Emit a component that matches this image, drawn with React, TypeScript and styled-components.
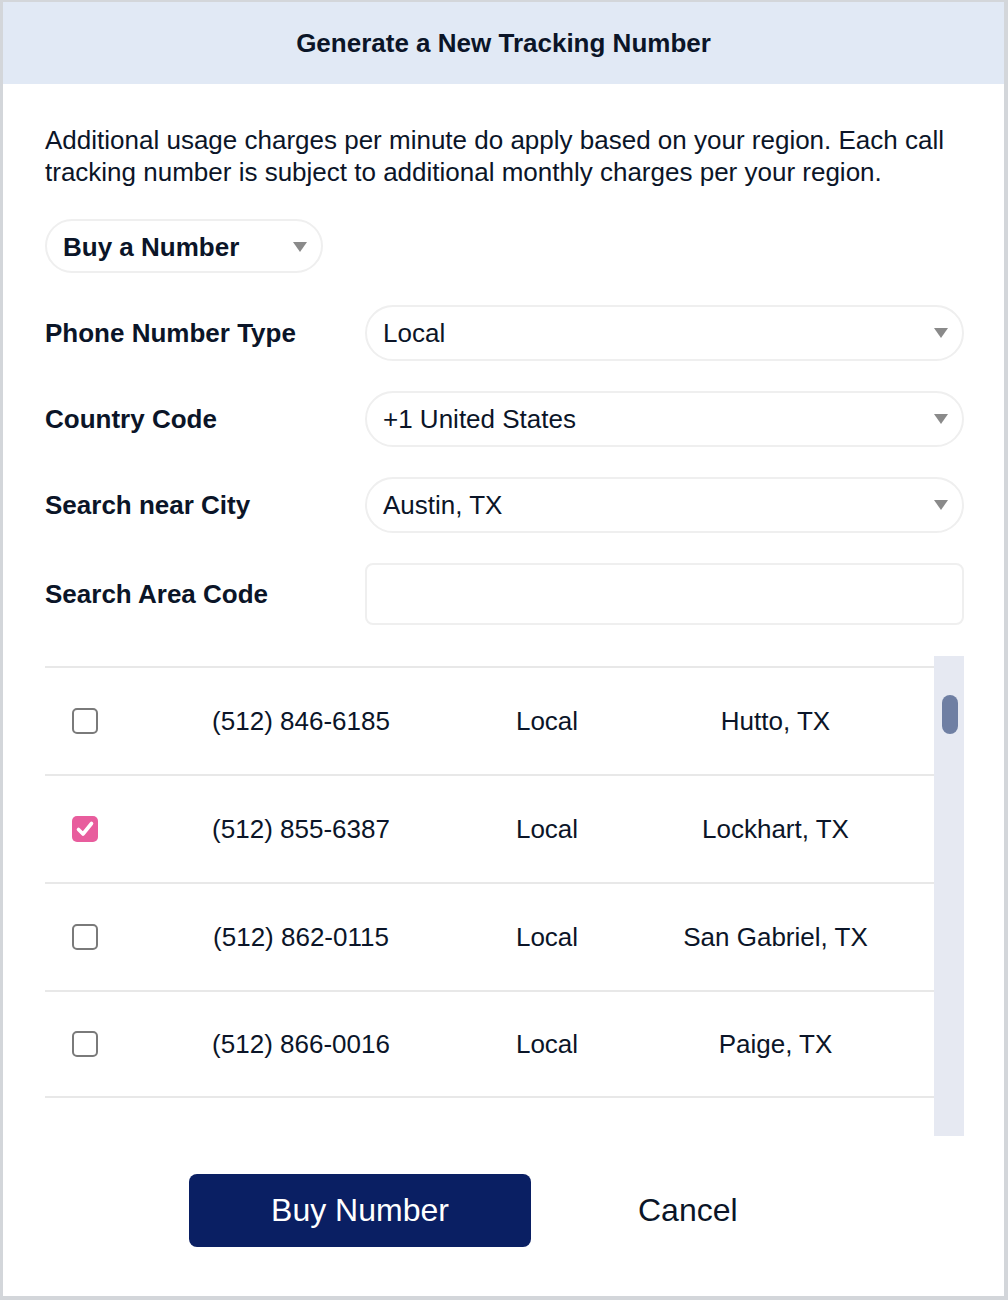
import React from 'react';
import styled, { createGlobalStyle } from 'styled-components';

const ink = '#0b1528';

type NumberRow = {
  phone: string;
  kind: string;
  city: string;
  checked: boolean;
};

const rows: NumberRow[] = [
  { phone: '(512) 846-6185', kind: 'Local', city: 'Hutto, TX', checked: false },
  { phone: '(512) 855-6387', kind: 'Local', city: 'Lockhart, TX', checked: true },
  { phone: '(512) 862-0115', kind: 'Local', city: 'San Gabriel, TX', checked: false },
  { phone: '(512) 866-0016', kind: 'Local', city: 'Paige, TX', checked: false },
];

const fields = [
  { label: 'Phone Number Type', value: 'Local' },
  { label: 'Country Code', value: '+1 United States' },
  { label: 'Search near City', value: 'Austin, TX' },
];

const Caret = () => (
  <CaretSvg viewBox="0 0 14 10" aria-hidden>
    <path d="M0 0 H14 L7 10 Z" fill="#8a8a8a" />
  </CaretSvg>
);

const Check = () => (
  <svg width="26" height="26" viewBox="0 0 26 26" aria-hidden>
    <path
      d="M6.5 13.5 L11 18 L19.5 7.5"
      fill="none"
      stroke="#fff"
      strokeWidth="3.6"
      strokeLinecap="round"
      strokeLinejoin="round"
    />
  </svg>
);

const App = () => {
  return (
    <>
      <GlobalStyle />
      <Modal>
        <Header>
          <Title>Generate a New Tracking Number</Title>
        </Header>
        <Body>
          <Description>
            Additional usage charges per minute do apply based on your region. Each call
            tracking number is subject to additional monthly charges per your region.
          </Description>

          <ModeSelect>
            <span>Buy a Number</span>
            <Caret />
          </ModeSelect>

          <FormGrid>
            {fields.map((f) => (
              <React.Fragment key={f.label}>
                <Label>{f.label}</Label>
                <PillSelect>
                  <span>{f.value}</span>
                  <Caret />
                </PillSelect>
              </React.Fragment>
            ))}
            <Label>Search Area Code</Label>
            <AreaInput />
          </FormGrid>

          <Results>
            <List>
              {rows.map((r) => (
                <Row key={r.phone}>
                  <CheckCell>
                    <Box $checked={r.checked}>{r.checked && <Check />}</Box>
                  </CheckCell>
                  <Cell>{r.phone}</Cell>
                  <Cell>{r.kind}</Cell>
                  <Cell>{r.city}</Cell>
                </Row>
              ))}
            </List>
            <Track>
              <Thumb />
            </Track>
          </Results>

          <Footer>
            <PrimaryButton>Buy Number</PrimaryButton>
            <TextButton>Cancel</TextButton>
          </Footer>
        </Body>
      </Modal>
    </>
  );
};

const GlobalStyle = createGlobalStyle`
  * { box-sizing: border-box; }
  body {
    margin: 0;
    background: #d3d6da;
    font-family: "Liberation Sans", Arial, Helvetica, sans-serif;
    color: ${ink};
  }
`;

const Modal = styled.div`
  margin: 2px 4px 0 3px;
  height: 1294px;
  background: #fff;
  display: flex;
  flex-direction: column;
`;

const Header = styled.div`
  height: 82px;
  background: #e1e9f5;
  display: flex;
  align-items: center;
  justify-content: center;
`;

const Title = styled.h1`
  margin: 0;
  font-size: 26px;
  font-weight: 700;
  color: ${ink};
`;

const Body = styled.div`
  padding: 40px 40px 0 42px;
  display: flex;
  flex-direction: column;
`;

const Description = styled.p`
  margin: 0;
  font-size: 26px;
  line-height: 32px;
`;

const CaretSvg = styled.svg`
  width: 14px;
  height: 10px;
  flex-shrink: 0;
`;

const ModeSelect = styled.div`
  margin-top: 31px;
  width: 278px;
  height: 54px;
  border: 2px solid #efefef;
  border-radius: 27px;
  display: flex;
  align-items: center;
  justify-content: space-between;
  padding: 2px 14px 0 16px;
  font-size: 26px;
  font-weight: 700;
`;

const FormGrid = styled.div`
  margin-top: 32px;
  display: grid;
  grid-template-columns: 320px 1fr;
  row-gap: 30px;
  align-items: center;
`;

const Label = styled.div`
  font-size: 26px;
  font-weight: 700;
`;

const PillSelect = styled.div`
  height: 56px;
  border: 2px solid #efefef;
  border-radius: 28px;
  display: flex;
  align-items: center;
  justify-content: space-between;
  padding: 0 14px 0 16px;
  font-size: 26px;
`;

const AreaInput = styled.input`
  height: 62px;
  border: 2px solid #efefef;
  border-radius: 8px;
  padding: 0 16px;
  font: inherit;
  font-size: 26px;
  outline: none;
`;

const Results = styled.div`
  margin-top: 31px;
  height: 480px;
  display: flex;
`;

const List = styled.div`
  flex: 1;
  padding-top: 10px;
`;

const Row = styled.div`
  height: 108px;
  display: grid;
  grid-template-columns: 80px 352px 140px 1fr;
  align-items: center;
  border-top: 2px solid #e8e8e8;
  &:last-child {
    border-bottom: 2px solid #e8e8e8;
  }
`;

const CheckCell = styled.div`
  display: flex;
  justify-content: center;
`;

const Box = styled.div<{ $checked: boolean }>`
  width: 26px;
  height: 26px;
  border-radius: 5px;
  display: flex;
  align-items: center;
  justify-content: center;
  background: ${(p) => (p.$checked ? '#e85d9d' : '#fff')};
  border: ${(p) => (p.$checked ? 'none' : '2px solid #7a7a7a')};
`;

const Cell = styled.div`
  text-align: center;
  font-size: 26px;
`;

const Track = styled.div`
  width: 30px;
  background: #e6e9f2;
  padding: 39px 0 0 8px;
`;

const Thumb = styled.div`
  width: 16px;
  height: 39px;
  border-radius: 8px;
  background: #6f7fa3;
`;

const Footer = styled.div`
  margin-top: 38px;
  display: flex;
  align-items: center;
  padding-left: 144px;
  gap: 107px;
`;

const PrimaryButton = styled.button`
  width: 342px;
  height: 73px;
  border: none;
  border-radius: 8px;
  background: #0a1f63;
  color: #fff;
  font-family: inherit;
  font-size: 32px;
  cursor: pointer;
`;

const TextButton = styled.button`
  border: none;
  background: none;
  padding: 0;
  color: ${ink};
  font-family: inherit;
  font-size: 32px;
  cursor: pointer;
`;

export default App;
